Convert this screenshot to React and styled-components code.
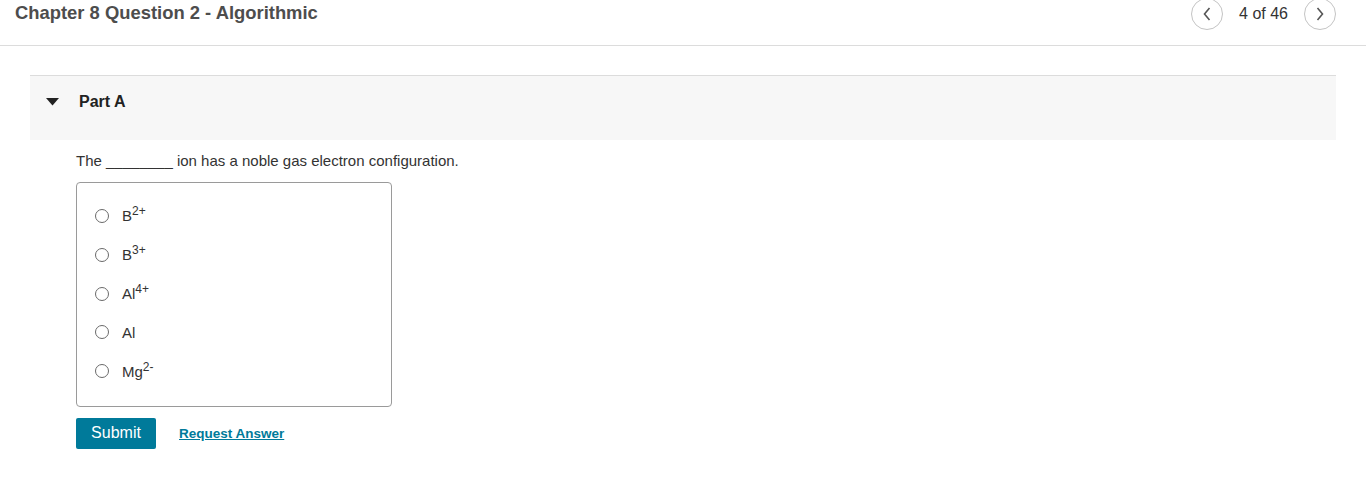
import React from "react";
import styled, { createGlobalStyle } from "styled-components";

const GlobalStyle = createGlobalStyle`
  body {
    margin: 0;
    background: #ffffff;
    font-family: "Liberation Sans", Arial, sans-serif;
    color: #333333;
  }
  * {
    box-sizing: border-box;
  }
`;

const Header = styled.header`
  height: 46px;
  border-bottom: 1px solid #dcdcdc;
  display: flex;
  align-items: flex-start;
  justify-content: space-between;
  padding: 0 30px 0 15px;
`;

const Title = styled.h1`
  margin: 2px 0 0;
  font-size: 18.4px;
  font-weight: bold;
  color: #4d4d4d;
  line-height: 22px;
`;

const Nav = styled.div`
  display: flex;
  align-items: center;
  gap: 16px;
  margin-top: -2px;
`;

const NavButton = styled.button`
  width: 32px;
  height: 32px;
  border-radius: 50%;
  border: 1px solid #c4c4c4;
  background: #fff;
  display: flex;
  align-items: center;
  justify-content: center;
  padding: 0;
  color: #555;
`;

const Count = styled.span`
  font-size: 16px;
  color: #333;
`;

const Main = styled.main`
  padding: 29px 30px 0;
`;

const PartHeader = styled.div`
  border-top: 1px solid #dcdcdc;
  background: #f7f7f7;
  height: 65px;
  display: flex;
  align-items: center;
  padding: 0 0 12px 16px;
  gap: 20px;
`;

const PartTitle = styled.span`
  font-size: 16px;
  font-weight: bold;
  color: #222;
`;

const Body = styled.div`
  padding-left: 46px;
`;

const Prompt = styled.p`
  margin: 12px 0 13px;
  font-size: 15px;
  color: #333;
`;

const OptionBox = styled.div`
  width: 316px;
  border: 1px solid #9a9a9a;
  border-radius: 4px;
  padding: 13.6px 0 15.4px 18px;
  display: flex;
  flex-direction: column;
`;

const Option = styled.label`
  display: flex;
  align-items: center;
  gap: 13px;
  height: 38.8px;
  font-size: 15px;
  color: #333;
`;

const Radio = styled.span`
  width: 14px;
  height: 14px;
  border-radius: 50%;
  border: 1px solid #6a6a6a;
  background: #fff;
`;

const Sup = styled.sup`
  font-size: 12px;
  vertical-align: 6px;
  line-height: 0;
`;

const Actions = styled.div`
  display: flex;
  align-items: center;
  gap: 23px;
  margin-top: 11px;
`;

const Submit = styled.button`
  background: #007a9a;
  color: #fff;
  border: none;
  border-radius: 2px;
  height: 31px;
  width: 80px;
  font-size: 16px;
  font-family: inherit;
`;

const Link = styled.a`
  color: #007a9a;
  font-size: 13.5px;
  font-weight: bold;
  text-decoration: underline;
`;

const options = [
  ["B", "2+"],
  ["B", "3+"],
  ["Al", "4+"],
  ["Al", null],
  ["Mg", "2-"],
];

export default function App() {
  return (
    <>
      <GlobalStyle />
      <Header>
        <Title>Chapter 8 Question 2 - Algorithmic</Title>
        <Nav>
          <NavButton aria-label="previous">
            <svg width="10" height="16" viewBox="0 0 10 16" fill="none" stroke="#555" strokeWidth="1.6">
              <path d="M7.5 2 L2.5 8 L7.5 14" />
            </svg>
          </NavButton>
          <Count>4 of 46</Count>
          <NavButton aria-label="next">
            <svg width="10" height="16" viewBox="0 0 10 16" fill="none" stroke="#555" strokeWidth="1.6">
              <path d="M2.5 2 L7.5 8 L2.5 14" />
            </svg>
          </NavButton>
        </Nav>
      </Header>
      <Main>
        <PartHeader>
          <svg width="13" height="8" viewBox="0 0 13 8">
            <path d="M0 0 L13 0 L6.5 7.5 Z" fill="#222" />
          </svg>
          <PartTitle>Part A</PartTitle>
        </PartHeader>
        <Body>
          <Prompt>The ________ ion has a noble gas electron configuration.</Prompt>
          <OptionBox>
            {options.map(([el, charge], i) => (
              <Option key={i}>
                <Radio />
                <span>
                  {el}
                  {charge && <Sup>{charge}</Sup>}
                </span>
              </Option>
            ))}
          </OptionBox>
          <Actions>
            <Submit>Submit</Submit>
            <Link href="#">Request Answer</Link>
          </Actions>
        </Body>
      </Main>
    </>
  );
}
